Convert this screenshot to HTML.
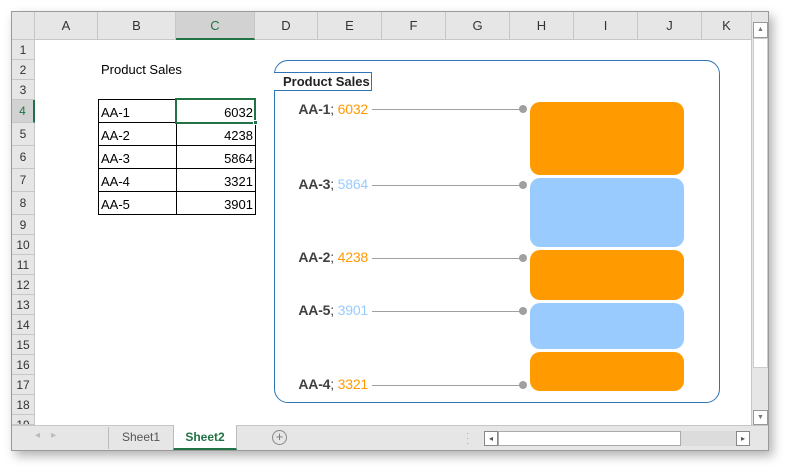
<!DOCTYPE html>
<html><head><style>
*{margin:0;padding:0;box-sizing:border-box}
body{width:794px;height:476px;background:#fff;position:relative;overflow:hidden;font-family:"Liberation Sans",sans-serif}
.win{position:absolute;left:11px;top:11px;width:758px;height:440px;border:1px solid #9a9a9a;background:#fff;box-shadow:4px 5px 10px rgba(0,0,0,.3)}
.a{position:absolute}
.ch{position:absolute;top:12px;height:28px;background:#e6e6e6;border-right:1px solid #c6c6c6;border-bottom:1px solid #c6c6c6;font-size:13px;color:#333;text-align:center;line-height:28px}
.rh{position:absolute;left:12px;width:23px;background:#e6e6e6;border-bottom:1px solid #c6c6c6;border-right:1px solid #c6c6c6;font-size:12px;color:#333;text-align:center}
.lbl{position:absolute;font-size:14px;color:#404040;font-weight:bold;width:120px;text-align:right;right:0;letter-spacing:-0.2px}
.ln{position:absolute;left:372px;width:151px;height:1px;background:#a0a0a0}
.dot{position:absolute;left:519px;width:8px;height:8px;border-radius:50%;background:#a0a0a0}
.bar{position:absolute;left:530px;width:154px;border-radius:10px}
</style></head><body>
<div class="win"></div>
<div class="a" style="left:12px;top:12px;width:23px;height:28px;background:#e6e6e6;border-right:1px solid #c6c6c6;border-bottom:1px solid #c6c6c6"></div>
<div class="ch" style="left:35px;width:63px">A</div>
<div class="ch" style="left:98px;width:78px">B</div>
<div class="ch" style="left:176px;width:79px;background:#d2d2d2;color:#217346;border-bottom:2px solid #217346">C</div>
<div class="ch" style="left:255px;width:63px">D</div>
<div class="ch" style="left:318px;width:64px">E</div>
<div class="ch" style="left:382px;width:64px">F</div>
<div class="ch" style="left:446px;width:64px">G</div>
<div class="ch" style="left:510px;width:64px">H</div>
<div class="ch" style="left:574px;width:64px">I</div>
<div class="ch" style="left:638px;width:64px">J</div>
<div class="ch" style="left:702px;width:50px">K</div>
<div class="rh" style="top:40px;height:20px;line-height:20px">1</div>
<div class="rh" style="top:60px;height:20px;line-height:20px">2</div>
<div class="rh" style="top:80px;height:20px;line-height:20px">3</div>
<div class="rh" style="top:100px;height:23px;line-height:23px;background:#d2d2d2;color:#217346;border-right:2px solid #217346">4</div>
<div class="rh" style="top:123px;height:23px;line-height:23px">5</div>
<div class="rh" style="top:146px;height:23px;line-height:23px">6</div>
<div class="rh" style="top:169px;height:23px;line-height:23px">7</div>
<div class="rh" style="top:192px;height:23px;line-height:23px">8</div>
<div class="rh" style="top:215px;height:20px;line-height:20px">9</div>
<div class="rh" style="top:235px;height:20px;line-height:20px">10</div>
<div class="rh" style="top:255px;height:20px;line-height:20px">11</div>
<div class="rh" style="top:275px;height:20px;line-height:20px">12</div>
<div class="rh" style="top:295px;height:20px;line-height:20px">13</div>
<div class="rh" style="top:315px;height:20px;line-height:20px">14</div>
<div class="rh" style="top:335px;height:20px;line-height:20px">15</div>
<div class="rh" style="top:355px;height:20px;line-height:20px">16</div>
<div class="rh" style="top:375px;height:20px;line-height:20px">17</div>
<div class="rh" style="top:395px;height:20px;line-height:20px">18</div>
<div class="rh" style="top:415px;height:10px;line-height:20px;overflow:hidden">19</div>
<div class="a" style="left:101px;top:62px;font-size:13px">Product Sales</div>
<div class="a" style="left:98px;top:99px;width:158px;height:116px;border:1px solid #000"></div>
<div class="a" style="left:176px;top:99px;width:1px;height:116px;background:#000"></div>
<div class="a" style="left:98px;top:122px;width:158px;height:1px;background:#000"></div>
<div class="a" style="left:98px;top:145px;width:158px;height:1px;background:#000"></div>
<div class="a" style="left:98px;top:168px;width:158px;height:1px;background:#000"></div>
<div class="a" style="left:98px;top:191px;width:158px;height:1px;background:#000"></div>
<div class="a" style="left:101px;top:101px;font-size:13px;line-height:23px">AA-1<br>AA-2<br>AA-3<br>AA-4<br>AA-5</div>
<div class="a" style="left:176px;top:101px;width:77px;text-align:right;font-size:13px;line-height:23px">6032<br>4238<br>5864<br>3321<br>3901</div>
<div class="a" style="left:175px;top:98px;width:81px;height:26px;border:2px solid #217346"></div>
<div class="a" style="left:253px;top:120px;width:5px;height:5px;background:#217346;border:1px solid #fff"></div>
<div class="a" style="left:274px;top:60px;width:446px;height:343px;border:1px solid #2e75b6;border-radius:14px"></div>
<div class="a" style="left:274px;top:72px;width:98px;height:19px;border:1px solid #2e75b6;border-left:none;background:#fff;font-size:13px;font-weight:bold;color:#222;padding-left:9px;line-height:17px">Product Sales</div>
<div class="bar" style="top:102px;height:73px;background:#ff9a00"></div>
<div class="bar" style="top:178px;height:69px;background:#9acbff"></div>
<div class="bar" style="top:250px;height:50px;background:#ff9a00"></div>
<div class="bar" style="top:303px;height:46px;background:#9acbff"></div>
<div class="bar" style="top:352px;height:39px;background:#ff9a00"></div>
<div class="a" style="left:248px;top:101px;width:120px;height:300px">
<div class="lbl" style="top:0">AA-1<span style="font-weight:normal">; </span><span style="color:#ff9a00;font-weight:normal">6032</span></div>
<div class="lbl" style="top:75px">AA-3<span style="font-weight:normal">; </span><span style="color:#9acbff;font-weight:normal">5864</span></div>
<div class="lbl" style="top:148px">AA-2<span style="font-weight:normal">; </span><span style="color:#ff9a00;font-weight:normal">4238</span></div>
<div class="lbl" style="top:201px">AA-5<span style="font-weight:normal">; </span><span style="color:#9acbff;font-weight:normal">3901</span></div>
<div class="lbl" style="top:275px">AA-4<span style="font-weight:normal">; </span><span style="color:#ff9a00;font-weight:normal">3321</span></div>
</div>
<div class="ln" style="top:109px"></div><div class="dot" style="top:105px"></div>
<div class="ln" style="top:185px"></div><div class="dot" style="top:181px"></div>
<div class="ln" style="top:258px"></div><div class="dot" style="top:254px"></div>
<div class="ln" style="top:311px"></div><div class="dot" style="top:307px"></div>
<div class="ln" style="top:385px"></div><div class="dot" style="top:381px"></div>
<div class="a" style="left:751px;top:12px;width:17px;height:413px;background:#e6e6e6;border-left:1px solid #c6c6c6"></div>
<div class="a" style="left:753px;top:22px;width:15px;height:16px;background:#fff;border:1px solid #999;font-size:7px;color:#777;text-align:center;line-height:14px">▲</div>
<div class="a" style="left:753px;top:38px;width:15px;height:330px;background:#fff;border:1px solid #ccc"></div>
<div class="a" style="left:753px;top:410px;width:15px;height:15px;background:#fff;border:1px solid #999;font-size:7px;color:#777;text-align:center;line-height:13px">▼</div>
<div class="a" style="left:12px;top:425px;width:756px;height:25px;background:#e6e6e6;border-top:1px solid #c6c6c6"></div>
<div class="a" style="left:35px;top:430px;font-size:10px;color:#bbb">◂ &nbsp;&nbsp;&nbsp;▸</div>
<div class="a" style="left:108px;top:427px;width:1px;height:22px;background:#bbb"></div>
<div class="a" style="left:109px;top:425px;width:64px;height:25px;font-size:12px;color:#555;text-align:center;line-height:25px">Sheet1</div>
<div class="a" style="left:173px;top:425px;width:64px;height:25px;background:#fff;border-left:1px solid #bbb;border-right:1px solid #bbb;border-bottom:2px solid #217346;font-size:12px;font-weight:bold;color:#217346;text-align:center;line-height:24px">Sheet2</div>
<div class="a" style="left:272px;top:430px;width:15px;height:15px;border:1px solid #888;border-radius:50%;text-align:center;font-size:13px;line-height:12px;color:#777">+</div>
<div class="a" style="left:466px;top:431px;font-size:10px;color:#aaa;line-height:5px">·<br>·<br>·</div>
<div class="a" style="left:484px;top:431px;width:266px;height:15px;background:#dcdcdc"></div>
<div class="a" style="left:484px;top:431px;width:14px;height:15px;background:#fff;border:1px solid #888;font-size:8px;line-height:13px;text-align:center;color:#555">◂</div>
<div class="a" style="left:498px;top:431px;width:183px;height:15px;background:#fff;border:1px solid #aaa"></div>
<div class="a" style="left:736px;top:431px;width:14px;height:15px;background:#fff;border:1px solid #888;font-size:8px;line-height:13px;text-align:center;color:#555">▸</div>
</body></html>
